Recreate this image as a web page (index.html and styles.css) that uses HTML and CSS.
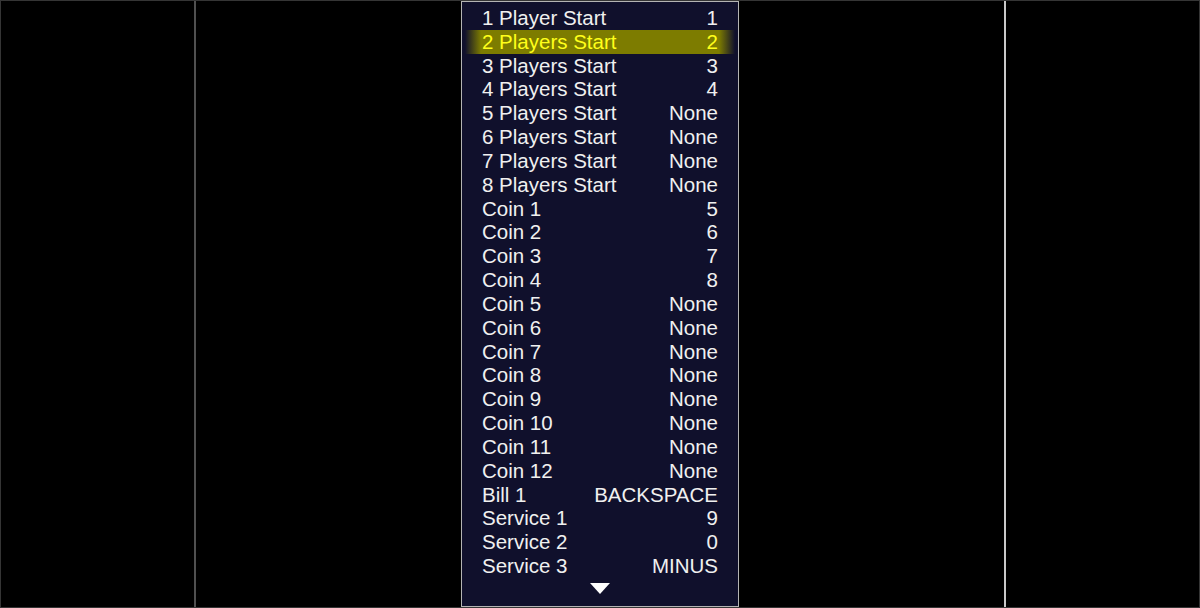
FILE: index.html
```html
<!DOCTYPE html>
<html>
<head>
<meta charset="utf-8">
<link rel="stylesheet" href="styles.css">
</head>
<body>
<div class="frame">
  <div class="screen">
    <div class="panel">
      <div class="list">
        <div class="row"><span>1 Player Start</span><span>1</span></div>
        <div class="row sel"><span>2 Players Start</span><span>2</span></div>
        <div class="row"><span>3 Players Start</span><span>3</span></div>
        <div class="row"><span>4 Players Start</span><span>4</span></div>
        <div class="row"><span>5 Players Start</span><span>None</span></div>
        <div class="row"><span>6 Players Start</span><span>None</span></div>
        <div class="row"><span>7 Players Start</span><span>None</span></div>
        <div class="row"><span>8 Players Start</span><span>None</span></div>
        <div class="row"><span>Coin 1</span><span>5</span></div>
        <div class="row"><span>Coin 2</span><span>6</span></div>
        <div class="row"><span>Coin 3</span><span>7</span></div>
        <div class="row"><span>Coin 4</span><span>8</span></div>
        <div class="row"><span>Coin 5</span><span>None</span></div>
        <div class="row"><span>Coin 6</span><span>None</span></div>
        <div class="row"><span>Coin 7</span><span>None</span></div>
        <div class="row"><span>Coin 8</span><span>None</span></div>
        <div class="row"><span>Coin 9</span><span>None</span></div>
        <div class="row"><span>Coin 10</span><span>None</span></div>
        <div class="row"><span>Coin 11</span><span>None</span></div>
        <div class="row"><span>Coin 12</span><span>None</span></div>
        <div class="row"><span>Bill 1</span><span>BACKSPACE</span></div>
        <div class="row"><span>Service 1</span><span>9</span></div>
        <div class="row"><span>Service 2</span><span>0</span></div>
        <div class="row"><span>Service 3</span><span>MINUS</span></div>
      </div>
      <div class="more"><svg width="20" height="11" viewBox="0 0 20 11"><polygon points="0,0 20,0 10,11" fill="#ffffff"/></svg></div>
    </div>
  </div>
</div>
</body>
</html>
```

FILE: styles.css
```css
html, body {
  margin: 0;
  padding: 0;
  background: #000;
}
.frame {
  width: 1200px;
  height: 608px;
  box-sizing: border-box;
  border: 1px solid #353535;
  background: #000;
  display: flex;
}
.screen {
  width: 812px;
  height: 100%;
  box-sizing: border-box;
  border-left: 2px solid #505050;
  border-right: 2px solid #c8c8c8;
  margin-left: 193px;
  display: flex;
  justify-content: center;
}
.panel {
  width: 278px;
  height: 606px;
  box-sizing: border-box;
  border: 1px solid #b4b4b4;
  background: #10102c;
  padding: 4px 20px 0 20px;
  display: flex;
  flex-direction: column;
  font-family: "Liberation Sans", Arial, sans-serif;
  font-size: 20.5px;
  color: #f0f0f0;
}
.list {
  display: flex;
  flex-direction: column;
}
.row {
  height: 23.83px;
  line-height: 23.83px;
  display: flex;
  justify-content: space-between;
  white-space: nowrap;
}
.row.sel {
  color: #ffff1a;
  margin: 0 -17px;
  padding: 0 17px;
  background: linear-gradient(to right, rgba(128,128,0,0) 0, #7d7c00 16px, #7d7c00 calc(100% - 16px), rgba(128,128,0,0) 100%);
}
.more {
  display: flex;
  justify-content: center;
  margin-top: 5px;
}
.more svg {
  display: block;
}
```
